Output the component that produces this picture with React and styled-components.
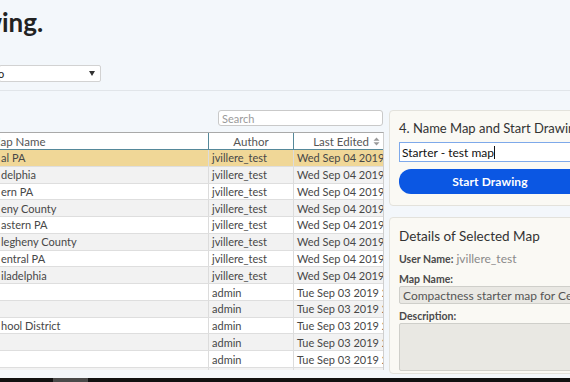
import React from "react";
import styled, { createGlobalStyle } from "styled-components";

const Global = createGlobalStyle`
  html, body { margin: 0; padding: 0; }
  body {
    background: #f3f7fb;
    font-family: Lato, "Noto Sans", sans-serif;
    color: #333;
    overflow: hidden;
    width: 570px;
    height: 382px;
  }
  * { box-sizing: border-box; }
`;

const Page = styled.div`
  display: flex;
  flex-direction: column;
  width: 570px;
  height: 382px;
  overflow: hidden;
`;

const Header = styled.header`
  height: 91px;
  border-bottom: 1px solid #e1e5e9;
  display: flex;
  flex-direction: column;
  overflow: hidden;
`;

const Title = styled.h1`
  margin: 6px 0 0 -61px;
  font-size: 26px;
  line-height: 32px;
  font-weight: 700;
  color: #222;
  white-space: nowrap;
`;

const FakeSelect = styled.div`
  margin-top: 27px;
  width: 102px;
  height: 17px;
  margin-left: -1px;
  background: #fff;
  border: 1px solid #d2d2d2;
  border-radius: 2px;
  display: flex;
  align-items: center;
  justify-content: space-between;
  padding: 0 5px 0 0;
  font-size: 11px;
  color: #222;
  overflow: hidden;
`;

const SelectText = styled.span`
  margin-left: -2px;
`;

const Caret = styled.span`
  width: 0;
  height: 0;
  border-left: 3px solid transparent;
  border-right: 3px solid transparent;
  border-top: 5px solid #333;
`;

const Main = styled.main`
  flex: 1;
  display: flex;
  gap: 5px;
  padding-top: 19px;
  min-height: 0;
`;

const LeftCol = styled.section`
  width: 384px;
  flex: none;
  display: flex;
  flex-direction: column;
`;

const SearchRow = styled.div`
  display: flex;
  justify-content: flex-end;
  padding-right: 1px;
  margin-bottom: 6px;
`;

const SearchInput = styled.input`
  width: 165px;
  height: 16px;
  border: 1px solid #c9c9c9;
  border-radius: 3px;
  background: #fff;
  font-family: inherit;
  font-size: 11px;
  padding: 0 3px;
  outline: none;
  &::placeholder { color: #9a9a9a; }
`;

const TableWrap = styled.div`
  height: 238px;
  background: #fff;
  border-top: 1px solid #a9a9a9;
  border-right: 1px solid #cfcfcf;
  overflow: hidden;
`;

const cols = "208px 85px 1fr";

const HeadRow = styled.div`
  display: grid;
  grid-template-columns: ${cols};
  height: 17px;
  border-bottom: 1px solid #55889a;
  background: #fff;
`;

const HeadCell = styled.div`
  display: flex;
  align-items: center;
  justify-content: ${(p) => p.$justify || "center"};
  gap: 4px;
  font-size: 11.5px;
  color: #555;
  white-space: nowrap;
  overflow: hidden;
  border-left: ${(p) => (p.$first ? "none" : "1px solid #55889a")};
  padding-right: ${(p) => (p.$pr ? "3px" : "0")};
`;

const HeadText = styled.span`
  margin-left: ${(p) => p.$indent || 0}px;
`;

const Row = styled.div`
  display: grid;
  grid-template-columns: ${cols};
  height: 16.77px;
  border-bottom: 1px solid #dedede;
  background: ${(p) => (p.$selected ? "#f0d797" : p.$alt ? "#f2f2f2" : "#fff")};
`;

const Cell = styled.div`
  display: flex;
  align-items: center;
  font-size: 11px;
  color: #474747;
  white-space: nowrap;
  overflow: hidden;
  padding-left: ${(p) => (p.$first ? "1px" : "3px")};
  border-left: ${(p) => (p.$first ? "none" : "1px solid #dcdcdc")};
`;

const RightCol = styled.aside`
  width: 202px;
  flex: none;
  display: flex;
  flex-direction: column;
  gap: 11px;
`;

const Panel = styled.div`
  background: #faf9f4;
  border: 1px solid #e3e2dc;
  border-radius: 4px;
  padding: ${(p) => p.$pad};
  display: flex;
  flex-direction: column;
  height: ${(p) => p.$h || "auto"};
`;

const PanelTitle = styled.h2`
  margin: 0;
  font-size: ${(p) => p.$size || "14px"};
  font-weight: 400;
  color: #333;
  white-space: nowrap;
  line-height: ${(p) => p.$lh || "18px"};
`;

const NameInput = styled.div`
  margin-top: ${(p) => p.$mt}px;
  height: 20px;
  border: 1px solid #7ea9ea;
  background: #fff;
  display: flex;
  align-items: center;
  padding: 0 2px;
  font-size: 12px;
  color: #111;
  white-space: nowrap;
`;

const Cursor = styled.span`
  display: inline-block;
  width: 1px;
  height: 13px;
  background: #111;
`;

const StartButton = styled.button`
  margin-top: 7px;
  height: 25px;
  border: none;
  border-radius: 12px;
  background: #0b57e3;
  color: #fff;
  font-family: inherit;
  font-size: 12px;
  font-weight: 700;
  letter-spacing: 0.1px;
`;

const InfoLine = styled.div`
  margin-top: ${(p) => p.$mt}px;
  display: flex;
  align-items: baseline;
  gap: 3px;
  white-space: nowrap;
  line-height: 14px;
  height: 14px;
`;

const Label = styled.span`
  font-size: 10.5px;
  font-weight: 700;
  color: #4a4a4a;
`;

const Value = styled.span`
  font-size: 12px;
  color: #8a8a8a;
`;

const ReadBox = styled.div`
  height: ${(p) => p.$h}px;
  background: #e9e8e3;
  border: 1px solid #cfcfca;
  border-radius: 2px;
  font-size: 12px;
  color: #555;
  padding: 0 3px;
  white-space: nowrap;
  overflow: hidden;
  display: flex;
  align-items: ${(p) => (p.$top ? "flex-start" : "center")};
`;

const Footer = styled.div`
  height: 4px;
  flex: none;
  background: #111;
  display: flex;
`;

const Thumb = styled.div`
  margin-left: 53px;
  width: 35px;
  background: #4a4a4a;
`;

function SortIcon() {
  return (
    <svg width="7" height="9" viewBox="0 0 7 9">
      <path d="M3.5 0.5 L6.5 3.8 H0.5 Z" fill="#9a9a9a" />
      <path d="M3.5 8.5 L6.5 5.2 H0.5 Z" fill="#9a9a9a" />
    </svg>
  );
}

const rows = [
  ["al PA", "jvillere_test", "Wed Sep 04 2019 22:41:07 GMT-0400"],
  ["delphia", "jvillere_test", "Wed Sep 04 2019 22:40:51 GMT-0400"],
  ["ern PA", "jvillere_test", "Wed Sep 04 2019 22:40:33 GMT-0400"],
  ["eny County", "jvillere_test", "Wed Sep 04 2019 22:40:12 GMT-0400"],
  ["astern PA", "jvillere_test", "Wed Sep 04 2019 22:38:58 GMT-0400"],
  ["legheny County", "jvillere_test", "Wed Sep 04 2019 22:38:40 GMT-0400"],
  ["entral PA", "jvillere_test", "Wed Sep 04 2019 22:38:21 GMT-0400"],
  ["iladelphia", "jvillere_test", "Wed Sep 04 2019 22:38:02 GMT-0400"],
  ["", "admin", "Tue Sep 03 2019 22:15:44 GMT-0400"],
  ["", "admin", "Tue Sep 03 2019 22:14:10 GMT-0400"],
  ["hool District", "admin", "Tue Sep 03 2019 22:12:36 GMT-0400"],
  ["", "admin", "Tue Sep 03 2019 22:11:02 GMT-0400"],
  ["", "admin", "Tue Sep 03 2019 22:09:30 GMT-0400"],
  ["", "admin", "Tue Sep 03 2019 22:08:01 GMT-0400"],
];

export default function App() {
  return (
    <>
      <Global />
      <Page>
        <Header>
          <Title>Drawing.</Title>
          <FakeSelect>
            <SelectText>o</SelectText>
            <Caret />
          </FakeSelect>
        </Header>
        <Main>
          <LeftCol>
            <SearchRow>
              <SearchInput placeholder="Search" />
            </SearchRow>
            <TableWrap>
              <HeadRow>
                <HeadCell $first $justify="flex-start">
                  <HeadText $indent={-10}>Map Name</HeadText>
                </HeadCell>
                <HeadCell>Author</HeadCell>
                <HeadCell $pr $justify="flex-end">
                  Last Edited <SortIcon />
                </HeadCell>
              </HeadRow>
              {rows.map((r, i) => (
                <Row key={i} $selected={i === 0} $alt={i % 2 === 1}>
                  <Cell $first>{r[0]}</Cell>
                  <Cell>{r[1]}</Cell>
                  <Cell>{r[2]}</Cell>
                </Row>
              ))}
            </TableWrap>
          </LeftCol>
          <RightCol>
            <Panel $pad="9px 9px 11px">
              <PanelTitle $size="13px" $lh="16px">4. Name Map and Start Drawing</PanelTitle>
              <NameInput $mt={6}>
                Starter - test map
                <Cursor />
              </NameInput>
              <StartButton>Start Drawing</StartButton>
            </Panel>
            <Panel $pad="9px 9px 0" $h="157px">
              <PanelTitle $size="13.5px">Details of Selected Map</PanelTitle>
              <InfoLine $mt={7}>
                <Label>User Name:</Label>
                <Value>jvillere_test</Value>
              </InfoLine>
              <InfoLine $mt={6}>
                <Label>Map Name:</Label>
              </InfoLine>
              <ReadBox $h={18}>Compactness starter map for Central PA</ReadBox>
              <InfoLine $mt={5}>
                <Label>Description:</Label>
              </InfoLine>
              <ReadBox $h={48} $top />
            </Panel>
          </RightCol>
        </Main>
        <Footer>
          <Thumb />
        </Footer>
      </Page>
    </>
  );
}
